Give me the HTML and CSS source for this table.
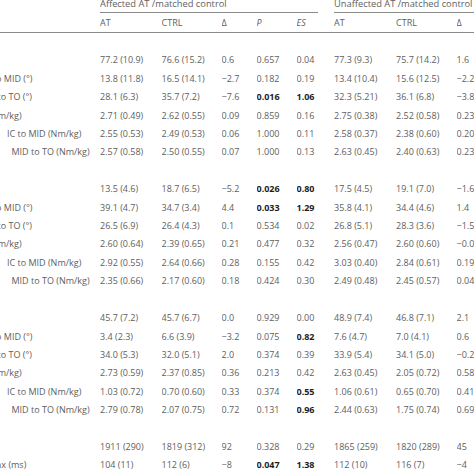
FILE: index.html
```html
<!DOCTYPE html>
<html lang="en">
<head>
<meta charset="utf-8">
<title>Table</title>
<link rel="stylesheet" href="styles.css">
</head>
<body>
<table class="tbl">
  <colgroup>
    <col class="c-lbl"><col class="c-at"><col class="c-ctrl"><col class="c-d"><col class="c-p"><col class="c-es"><col class="c-at2"><col class="c-ctrl2"><col class="c-d2">
  </colgroup>
  <thead>
    <tr>
      <th></th>
      <th colspan="5"><div class="grp grp-a">Affected AT /matched control</div></th>
      <th colspan="3"><div class="grp grp-b">Unaffected AT /matched control</div></th>
    </tr>
    <tr class="sub">
      <th></th><th>AT</th><th>CTRL</th><th>Δ</th><th><i>P</i></th><th><i>ES</i></th><th>AT</th><th>CTRL</th><th>Δ</th>
    </tr>
  </thead>
  <tbody>
    <tr class="sec"><td><b>Hip</b></td><td></td><td></td><td></td><td></td><td></td><td></td><td></td><td></td></tr>
    <tr><td>Angle at IC (°)</td><td>77.2 (10.9)</td><td>76.6 (15.2)</td><td>0.6</td><td>0.657</td><td>0.04</td><td>77.3 (9.3)</td><td>75.7 (14.2)</td><td>1.6</td></tr>
    <tr><td>Excursions IC to MID (°)</td><td>13.8 (11.8)</td><td>16.5 (14.1)</td><td>−2.7</td><td>0.182</td><td>0.19</td><td>13.4 (10.4)</td><td>15.6 (12.5)</td><td>−2.2</td></tr>
    <tr><td>Excursion MID to TO (°)</td><td>28.1 (6.3)</td><td>35.7 (7.2)</td><td>−7.6</td><td><b>0.016</b></td><td><b>1.06</b></td><td>32.3 (5.21)</td><td>36.1 (6.8)</td><td>−3.8</td></tr>
    <tr><td>Peak torque (Nm/kg)</td><td>2.71 (0.49)</td><td>2.62 (0.55)</td><td>0.09</td><td>0.859</td><td>0.16</td><td>2.75 (0.38)</td><td>2.52 (0.58)</td><td>0.23</td></tr>
    <tr><td class="ind-a">IC to MID (Nm/kg)</td><td>2.55 (0.53)</td><td>2.49 (0.53)</td><td>0.06</td><td>1.000</td><td>0.11</td><td>2.58 (0.37)</td><td>2.38 (0.60)</td><td>0.20</td></tr>
    <tr><td class="ind-b">MID to TO (Nm/kg)</td><td>2.57 (0.58)</td><td>2.50 (0.55)</td><td>0.07</td><td>1.000</td><td>0.13</td><td>2.63 (0.45)</td><td>2.40 (0.63)</td><td>0.23</td></tr>

    <tr class="sec"><td><b>Knee</b></td><td></td><td></td><td></td><td></td><td></td><td></td><td></td><td></td></tr>
    <tr><td>Angle at IC (°)</td><td>13.5 (4.6)</td><td>18.7 (6.5)</td><td>−5.2</td><td><b>0.026</b></td><td><b>0.80</b></td><td>17.5 (4.5)</td><td>19.1 (7.0)</td><td>−1.6</td></tr>
    <tr><td>Excursions IC to MID (°)</td><td>39.1 (4.7)</td><td>34.7 (3.4)</td><td>4.4</td><td><b>0.033</b></td><td><b>1.29</b></td><td>35.8 (4.1)</td><td>34.4 (4.6)</td><td>1.4</td></tr>
    <tr><td>Excursion MID to TO (°)</td><td>26.5 (6.9)</td><td>26.4 (4.3)</td><td>0.1</td><td>0.534</td><td>0.02</td><td>26.8 (5.1)</td><td>28.3 (3.6)</td><td>−1.5</td></tr>
    <tr><td>Peak torque (Nm/kg)</td><td>2.60 (0.64)</td><td>2.39 (0.65)</td><td>0.21</td><td>0.477</td><td>0.32</td><td>2.56 (0.47)</td><td>2.60 (0.60)</td><td>−0.04</td></tr>
    <tr><td class="ind-a">IC to MID (Nm/kg)</td><td>2.92 (0.55)</td><td>2.64 (0.66)</td><td>0.28</td><td>0.155</td><td>0.42</td><td>3.03 (0.40)</td><td>2.84 (0.61)</td><td>0.19</td></tr>
    <tr><td class="ind-b">MID to TO (Nm/kg)</td><td>2.35 (0.66)</td><td>2.17 (0.60)</td><td>0.18</td><td>0.424</td><td>0.30</td><td>2.49 (0.48)</td><td>2.45 (0.57)</td><td>0.04</td></tr>

    <tr class="sec"><td><b>Ankle</b></td><td></td><td></td><td></td><td></td><td></td><td></td><td></td><td></td></tr>
    <tr><td>Angle at IC (°)</td><td>45.7 (7.2)</td><td>45.7 (6.7)</td><td>0.0</td><td>0.929</td><td>0.00</td><td>48.9 (7.4)</td><td>46.8 (7.1)</td><td>2.1</td></tr>
    <tr><td>Excursions IC to MID (°)</td><td>3.4 (2.3)</td><td>6.6 (3.9)</td><td>−3.2</td><td>0.075</td><td><b>0.82</b></td><td>7.6 (4.7)</td><td>7.0 (4.1)</td><td>0.6</td></tr>
    <tr><td>Excursion MID to TO (°)</td><td>34.0 (5.3)</td><td>32.0 (5.1)</td><td>2.0</td><td>0.374</td><td>0.39</td><td>33.9 (5.4)</td><td>34.1 (5.0)</td><td>−0.2</td></tr>
    <tr><td>Peak torque (Nm/kg)</td><td>2.73 (0.59)</td><td>2.37 (0.85)</td><td>0.36</td><td>0.213</td><td>0.42</td><td>2.63 (0.45)</td><td>2.05 (0.72)</td><td>0.58</td></tr>
    <tr><td class="ind-a">IC to MID (Nm/kg)</td><td>1.03 (0.72)</td><td>0.70 (0.60)</td><td>0.33</td><td>0.374</td><td><b>0.55</b></td><td>1.06 (0.61)</td><td>0.65 (0.70)</td><td>0.41</td></tr>
    <tr><td class="ind-b">MID to TO (Nm/kg)</td><td>2.79 (0.78)</td><td>2.07 (0.75)</td><td>0.72</td><td>0.131</td><td><b>0.96</b></td><td>2.44 (0.63)</td><td>1.75 (0.74)</td><td>0.69</td></tr>

    <tr class="sec"><td><b>GRF</b></td><td></td><td></td><td></td><td></td><td></td><td></td><td></td><td></td></tr>
    <tr><td>GRF max (N)</td><td>1911 (290)</td><td>1819 (312)</td><td>92</td><td>0.328</td><td>0.29</td><td>1865 (259)</td><td>1820 (289)</td><td>45</td></tr>
    <tr><td>Time to GRF max (ms)</td><td>104 (11)</td><td>112 (6)</td><td>−8</td><td><b>0.047</b></td><td><b>1.38</b></td><td>112 (10)</td><td>116 (7)</td><td>−4</td></tr>
  </tbody>
</table>
</body>
</html>
```

FILE: styles.css
```css
html, body {
  margin: 0;
  padding: 0;
  overflow: hidden;
  background: #ffffff;
}

body {
  font-family: "Open Sans", "Liberation Sans", sans-serif;
  font-size: 9px;
  color: #606060;
}

.tbl {
  border-collapse: separate;
  border-spacing: 0;
  table-layout: fixed;
  width: 562px;
  margin: -4px 0 0 -65px;
}

.c-lbl { width: 165px; }
.c-at { width: 61.5px; }
.c-ctrl { width: 60px; }
.c-d { width: 35px; }
.c-p { width: 40px; }
.c-es { width: 37.5px; }
.c-at2 { width: 62px; }
.c-ctrl2 { width: 60.5px; }
.c-d2 { width: 40.5px; }

.tbl th,
.tbl td {
  padding: 0;
  text-align: left;
  font-weight: normal;
  white-space: nowrap;
  overflow: hidden;
  vertical-align: middle;
}

.tbl td.ind-a { padding-left: 72px; }
.tbl td.ind-b { padding-left: 76.5px; }

.grp {
  font-size: 9.3px;
  line-height: 16px;
  border-bottom: 1px solid #8a8a8a;
}

.grp-a { margin-right: 16px; margin-left: -1px; padding-left: 1px; }
.grp-b { margin-left: -2px; padding-left: 2px; }

.sub th {
  height: 19px;
  line-height: 19px;
  border-bottom: 1px solid #8a8a8a;
}

.tbl tbody td {
  height: 18.4px;
  line-height: 18.4px;
}

.tbl b {
  font-weight: 700;
  color: #1e1e1e;
}

.sec b {
  color: #333;
}
```
